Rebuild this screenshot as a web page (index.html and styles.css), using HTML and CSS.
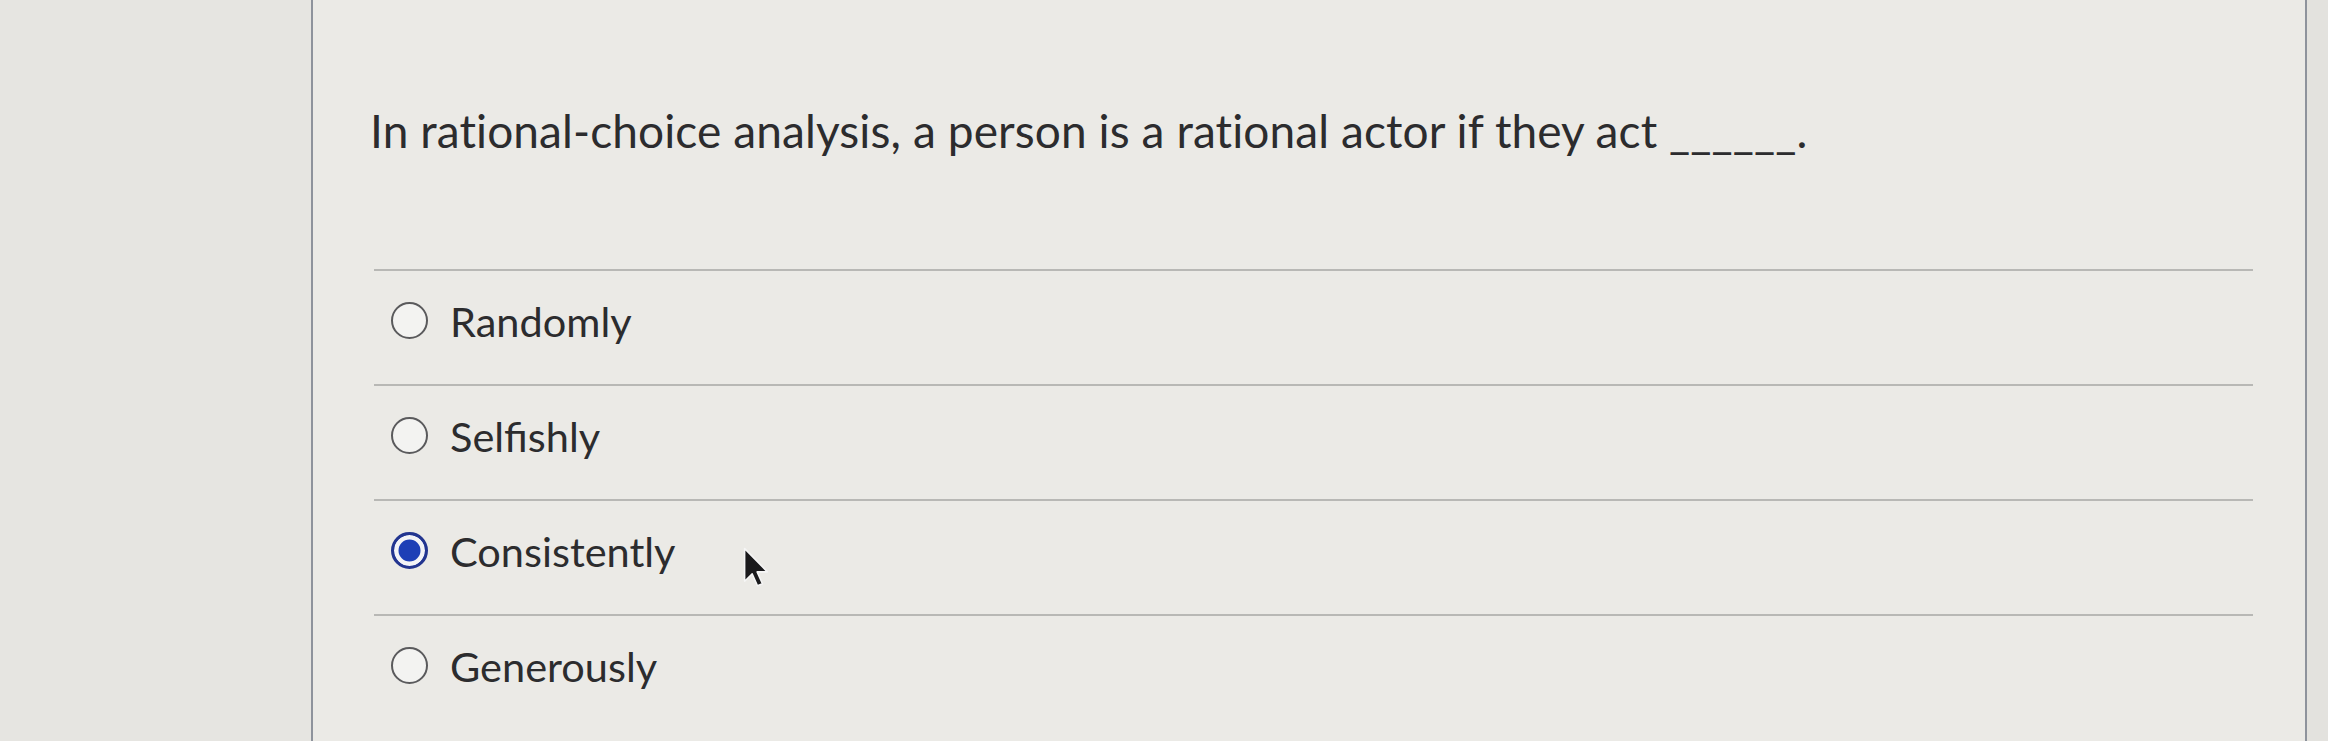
FILE: index.html
```html
<!DOCTYPE html>
<html lang="en">
<head>
<meta charset="utf-8">
<title>Question</title>
<link rel="stylesheet" href="styles.css">
</head>
<body>
<div class="page">
  <aside class="sidebar"></aside>
  <main class="panel">
    <p class="question">In rational-choice analysis, a person is a rational actor if they act ______.</p>
    <ul class="options">
      <li class="option"><span class="radio"></span><span class="label">Randomly</span></li>
      <li class="option"><span class="radio"></span><span class="label">Selfishly</span></li>
      <li class="option"><span class="radio checked"></span><span class="label">Consistently</span>
        <svg class="cursor" viewBox="0 0 19 30" width="26" height="41" aria-hidden="true">
          <path d="M1.2 1.2 L1.2 25 L6.7 19.6 L10.6 28.4 L14.2 26.9 L10.3 18.2 L17.8 18.2 Z" fill="#1a1a1c" stroke="#f6f6f6" stroke-width="1.1" stroke-linejoin="round"/>
        </svg>
      </li>
      <li class="option"><span class="radio"></span><span class="label">Generously</span></li>
    </ul>
  </main>
  <div class="edge"></div>
</div>
</body>
</html>
```

FILE: styles.css
```css
html, body {
  margin: 0;
  padding: 0;
  height: 100%;
}
body {
  background: #e5e4e0;
  font-family: Lato, "Open Sans", "Liberation Sans", sans-serif;
  color: #2c2c2e;
  overflow: hidden;
}
.page {
  display: flex;
  height: 741px;
}
.sidebar {
  width: 311px;
  flex: none;
  background: #e6e5e1;
  border-right: 2px solid #8e939c;
}
.panel {
  flex: 1;
  background: #ebeae6;
  padding: 0 52px 0 57px;
  border-right: 2px solid #8e939c;
}
.edge {
  width: 21px;
  flex: none;
  background: #e3e2de;
}
.question {
  margin: 104px 0 0 0;
  font-size: 46px;
  line-height: 54px;
  letter-spacing: 0.1px;
}
.options {
  list-style: none;
  margin: 111px 0 0 4px;
  padding: 0;
}
.option {
  position: relative;
  display: flex;
  align-items: center;
  height: 115px;
  border-top: 2px solid #b8b8b5;
  padding-left: 17px;
  box-sizing: border-box;
  padding-bottom: 14px;
}
.radio {
  width: 37px;
  height: 37px;
  border: 2.5px solid #5a5a5c;
  border-radius: 50%;
  box-sizing: border-box;
  flex: none;
  margin-right: 22px;
  background: #f3f3f1;
}
.radio.checked {
  border: 3px solid #23358f;
  background: #1d3fb6;
  box-shadow: inset 0 0 0 4.5px #f3f3f6;
}
.label {
  font-size: 41.5px;
  line-height: 50px;
}
.cursor {
  position: absolute;
  left: 369px;
  top: 46px;
}
```
